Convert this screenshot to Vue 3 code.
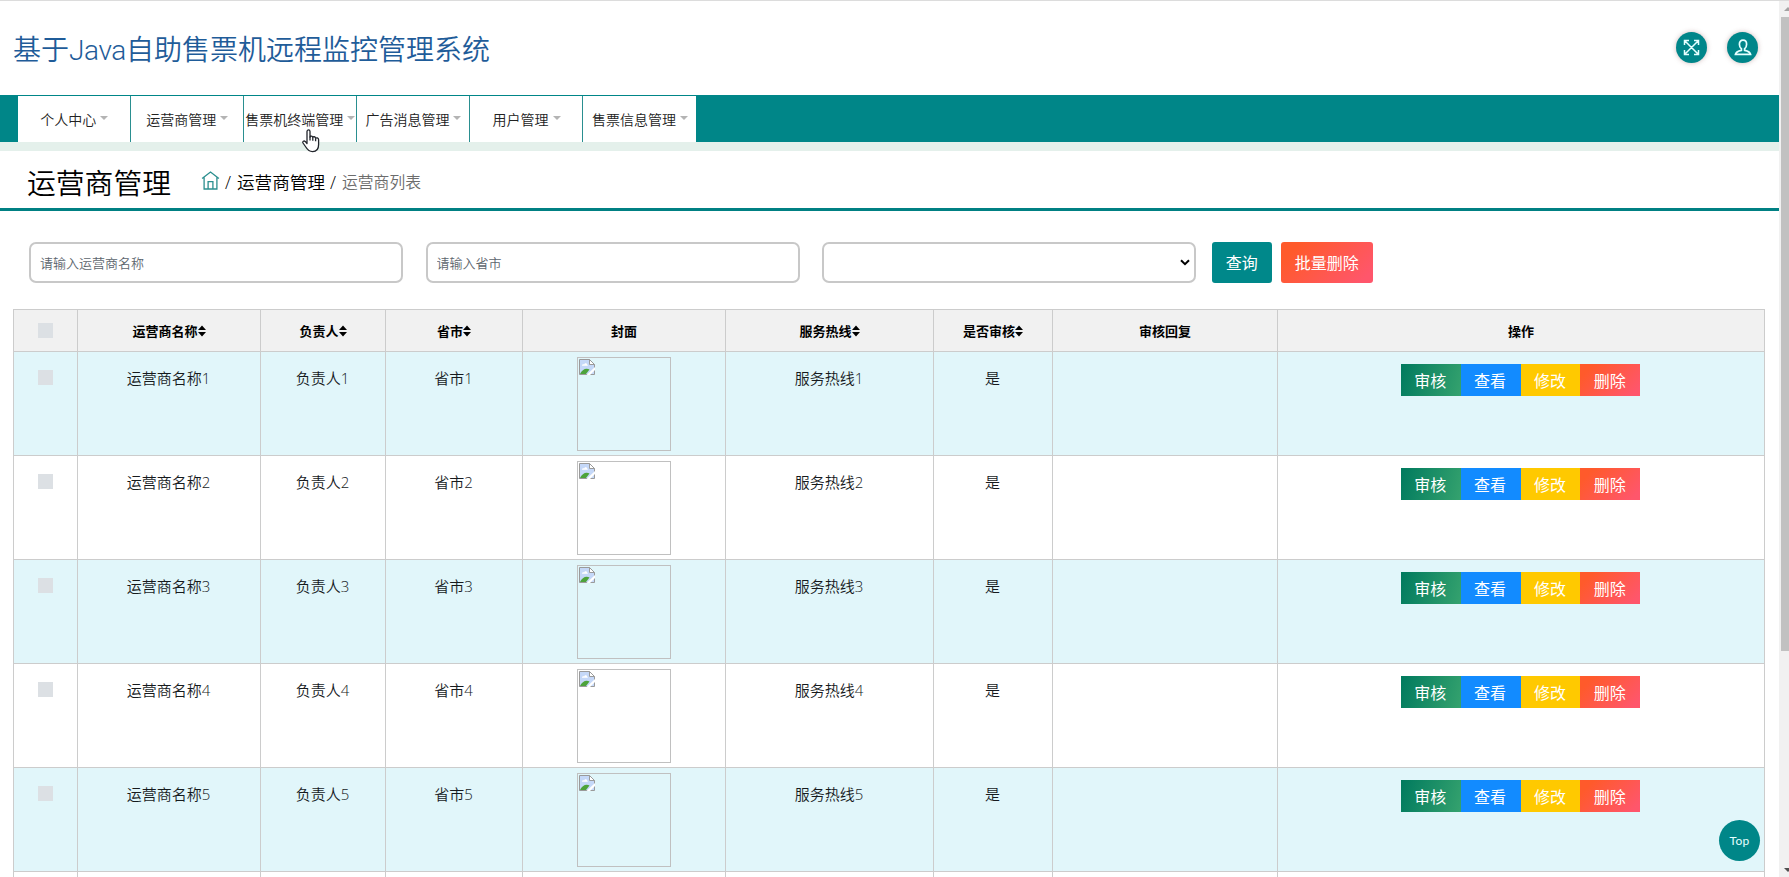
<script setup>
const menus = ['个人中心', '运营商管理', '售票机终端管理', '广告消息管理', '用户管理', '售票信息管理']
const columns = [
  { label: '运营商名称', sort: true },
  { label: '负责人', sort: true },
  { label: '省市', sort: true },
  { label: '封面', sort: false },
  { label: '服务热线', sort: true },
  { label: '是否审核', sort: true },
  { label: '审核回复', sort: false },
  { label: '操作', sort: false },
]
const rows = [1, 2, 3, 4, 5]
</script>

<template>
  <div class="screen">
    <div class="page">
      <header class="header">
        <h1 class="title">基于<span class="latin">Java</span>自助售票机远程监控管理系统</h1>
        <div class="tools">
          <span class="round">
            <svg width="17" height="17" viewBox="0 0 17 17" fill="none" stroke="#e6ffff" stroke-width="1.5">
              <path d="M2 2L15 15M15 2L2 15M1.5 6V1.5H6M11 1.5H15.5V6M15.5 11V15.5H11M6 15.5H1.5V11" />
            </svg>
          </span>
          <span class="round">
            <svg width="18" height="17" viewBox="0 0 18 17" fill="none" stroke="#e6ffff" stroke-width="1.7">
              <path d="M9 1.2C6.6 1.2 5.4 2.9 5.4 5.2C5.4 7.3 6.3 8.9 7.4 9.7V11.3C4.2 12 1.8 13 1.4 15.4H16.6C16.2 13 13.8 12 10.6 11.3V9.7C11.7 8.9 12.6 7.3 12.6 5.2C12.6 2.9 11.4 1.2 9 1.2Z" />
            </svg>
          </span>
        </div>
      </header>

      <nav class="nav">
        <a v-for="m in menus" :key="m" class="tab">{{ m }}<i class="caret"></i></a>
      </nav>

      <section class="crumbs">
        <h2 class="heading">运营商管理</h2>
        <svg class="home" width="19" height="19" viewBox="0 0 18 19" fill="none" stroke="#2b8f8f" stroke-width="1.3">
          <path d="M0.6 7.6L9 1L17.4 7.6M2.6 6.4V18H15.4V6.4M6.6 18V10.6H11.4V18" />
        </svg>
        <span class="crumb slash">/</span>
        <span class="crumb">运营商管理</span>
        <span class="crumb slash2">/</span>
        <span class="crumb current">运营商列表</span>
      </section>

      <section class="filters">
        <input class="field" placeholder="请输入运营商名称" />
        <input class="field" placeholder="请输入省市" />
        <div class="field select">
          <svg width="10" height="7" viewBox="0 0 10 7" fill="none" stroke="#000" stroke-width="2"><path d="M1 1.2L5 5.2L9 1.2" /></svg>
        </div>
        <button class="btn query">查询</button>
        <button class="btn batch">批量删除</button>
      </section>

      <table class="grid">
        <colgroup>
          <col class="c0" /><col class="c1" /><col class="c2" /><col class="c3" /><col class="c4" />
          <col class="c5" /><col class="c6" /><col class="c7" /><col class="c8" />
        </colgroup>
        <thead>
          <tr>
            <th><i class="box"></i></th>
            <th v-for="c in columns" :key="c.label">
              <span class="th">{{ c.label }}<svg v-if="c.sort" width="8" height="12" viewBox="0 0 8 12"><path d="M0 5L4 0.5L8 5ZM0 7L4 11.5L8 7Z" /></svg></span>
            </th>
          </tr>
        </thead>
        <tbody>
          <tr v-for="n in rows" :key="n">
            <td><i class="box"></i></td>
            <td>运营商名称{{ n }}</td>
            <td>负责人{{ n }}</td>
            <td>省市{{ n }}</td>
            <td class="cover">
              <div class="broken">
                <svg width="16" height="16" viewBox="0 0 16 16">
                  <path d="M0.5 0.5H10.5L15.5 5.5V15.5H0.5Z" fill="#c5d8f8" stroke="#9a9a9a" />
                  <path d="M3 6.5C3 5 5 5 5.2 5.5C5.5 3.8 8 4 8 5.5C9 5.5 9 6.5 8.5 6.8H3Z" fill="#fff" />
                  <path d="M1 15C3 10.5 7 8.5 10.5 10.5L7 15Z" fill="#4da33b" />
                  <path d="M10.5 0.5V5.5H15.5Z" fill="#fff" stroke="#9a9a9a" />
                  <path d="M7.5 16L16 8V11L11 16Z" fill="#fff" />
                </svg>
              </div>
            </td>
            <td>服务热线{{ n }}</td>
            <td>是</td>
            <td></td>
            <td class="ops">
              <div class="group">
                <button class="op audit">审核</button>
                <button class="op view">查看</button>
                <button class="op edit">修改</button>
                <button class="op del">删除</button>
              </div>
            </td>
          </tr>
          <tr class="next">
            <td v-for="k in 9" :key="k"></td>
          </tr>
        </tbody>
      </table>
    </div>

    <div class="scrollbar">
      <i class="arrow up"></i>
      <i class="thumb"></i>
      <i class="arrow down"></i>
    </div>

    <div class="top">Top</div>

    <svg class="pointer" width="18" height="24" viewBox="0 0 18 24" fill="#fff" stroke="#22252c" stroke-width="1.3" stroke-linejoin="round">
      <path d="M5 14.5V2.6C5 0.4 8 0.4 8 2.6V8C8.3 6.6 10.6 6.8 10.8 8.4C11.4 7.2 13.4 7.6 13.6 9.2C14.4 8.4 16.6 8.8 16.6 10.8V15.5C16.6 19.5 14.6 22.6 10.6 22.6C6.6 22.6 5.2 20.4 3.8 18L1 14C0.2 12.4 2 11.4 3.2 12.4Z" />
      <path d="M8 7.5V11.5M10.8 8.4V11.8M13.6 9.2V12.2" fill="none" />
    </svg>
  </div>
</template>

<style>
body {
  margin: 0;
  overflow: hidden;
}
</style>

<style scoped>
.screen {
  position: relative;
  display: flex;
  width: 1789px;
  height: 877px;
  overflow: hidden;
  background: #fff;
  font-family: "Open Sans", "Noto Sans CJK SC", sans-serif;
  font-weight: 350;
  box-sizing: border-box;
  border-top: 1px solid #dcdcdc;
}
.page {
  width: 1779px;
  height: 876px;
  overflow: hidden;
}
.header {
  display: flex;
  justify-content: space-between;
  height: 94px;
  padding: 0 21px 0 13px;
}
.title {
  margin: 0;
  font-size: 28px;
  line-height: 97px;
  font-weight: 350;
  color: #1f5c99;
  white-space: nowrap;
}
.latin {
  font-family: Roboto, sans-serif;
  font-weight: 350;
  letter-spacing: -0.4px;
}
.tools {
  display: flex;
  gap: 20px;
  padding-top: 30.5px;
}
.round {
  display: flex;
  align-items: center;
  justify-content: center;
  width: 31px;
  height: 31px;
  border-radius: 50%;
  background: #00868a;
  box-shadow: 0 0 5px rgba(120, 60, 60, 0.35);
}
.nav {
  display: flex;
  height: 47px;
  padding-left: 17.6px;
  background: #008688;
  border-bottom: 9px solid #e4f0eb;
}
.tab {
  display: flex;
  align-items: center;
  justify-content: center;
  width: 113.1px;
  height: 46px;
  margin-top: 1px;
  padding: 0 0 1px 1px;
  box-sizing: border-box;
  border-right: 1px solid #2a8f90;
  background: #fff;
  font-size: 14px;
  color: #222;
  white-space: nowrap;
}
.tab:last-child {
  border-right: 0;
}
.caret {
  width: 0;
  height: 0;
  margin: -2px 0 0 4px;
  border: 4px solid transparent;
  border-top-color: #b4b4b4;
  border-bottom: 0;
}
.crumbs {
  display: flex;
  align-items: center;
  height: 57px;
  padding-left: 27px;
  border-bottom: 3px solid #008083;
}
.heading {
  margin: 7px 30px 0 0;
  font-size: 28.8px;
  line-height: 40px;
  font-weight: 350;
  color: #000;
}
.home {
  margin-top: 2px;
}
.crumb {
  margin-top: 4px;
  font-size: 17.6px;
  line-height: 24px;
  color: #000;
}
.slash {
  margin-left: 5px;
  width: 12px;
}
.slash2 {
  margin-left: 5px;
  width: 12px;
}
.current {
  font-size: 15.8px;
  color: #6c6c6c;
}
.filters {
  display: flex;
  height: 41px;
  padding: 31px 0 0 29px;
}
.field {
  width: 374px;
  height: 41px;
  margin-right: 22.6px;
  padding: 0 9px;
  box-sizing: border-box;
  border: 2px solid #c8c8c8;
  border-radius: 7px;
  background: #fff;
  font-family: inherit;
  font-weight: 350;
  font-size: 13px;
  outline: 0;
}
.field::placeholder {
  color: #5c656d;
  opacity: 1;
}
.select {
  display: flex;
  align-items: center;
  justify-content: flex-end;
  padding-right: 4px;
  margin-right: 16px;
}
.btn {
  height: 41px;
  padding: 0 1px 1px 0;
  border: 0;
  border-radius: 3px;
  font-family: inherit;
  font-size: 16px;
  color: #fff;
}
.query {
  width: 60px;
  margin-right: 9px;
  background: #00888a;
}
.batch {
  width: 92px;
  background: linear-gradient(135deg, #ff5a2b 15%, #ff566b 90%);
}
.grid {
  width: 1752px;
  margin: 26px 0 0 13px;
  table-layout: fixed;
  border-collapse: collapse;
  text-align: center;
}
.c0 { width: 64px; }
.c1 { width: 183px; }
.c2 { width: 125px; }
.c3 { width: 137px; }
.c4 { width: 203px; }
.c5 { width: 208px; }
.c6 { width: 119px; }
.c7 { width: 225px; }
.c8 { width: 487px; }
th,
td {
  padding: 0;
  border: 1px solid #ccc;
}
th {
  height: 41px;
  background: #f1f1f1;
  font-size: 13px;
  font-weight: 700;
  color: #000;
}
.th {
  display: inline-flex;
  align-items: center;
}
td {
  height: 88px;
  padding: 15px 1px 0 0;
  vertical-align: top;
  font-size: 15px;
  line-height: 22px;
  color: #161a1d;
}
tbody tr:nth-child(odd) {
  background: #e1f6fa;
}
.box {
  display: block;
  width: 15px;
  height: 15px;
  margin: 0 auto;
  background: #dce0e4;
}
td .box {
  margin-top: 3px;
}
td.cover {
  height: 98px;
  padding-top: 5px;
}
.broken {
  width: 94px;
  height: 94px;
  margin: 0 auto;
  box-sizing: border-box;
  border: 1px solid #c0c0c0;
}
.broken svg {
  display: block;
  margin: 1px;
}
td.ops {
  height: 91px;
  padding-top: 12px;
}
.group {
  display: flex;
  justify-content: center;
}
.op {
  width: 59.9px;
  height: 32px;
  padding: 0 1px 1px 0;
  border: 0;
  font-family: inherit;
  font-size: 16px;
  color: #fff;
}
.audit { background: linear-gradient(105deg, #007a5e, #35a26e); }
.view { background: #128bff; }
.edit { background: #ffc900; }
.del { background: linear-gradient(135deg, #ff5a2b 15%, #ff566b 90%); }
.scrollbar {
  display: flex;
  flex-direction: column;
  align-items: flex-start;
  width: 10px;
  height: 876px;
  overflow: hidden;
  background: #f1f1f1;
}
.thumb {
  flex: none;
  width: 8px;
  height: 634px;
  margin: 6px 0 0 2px;
  background: #c1c1c1;
}
.arrow {
  flex: none;
  width: 0;
  height: 0;
  margin-left: 5px;
  border: 4px solid transparent;
}
.up {
  margin-top: 6px;
  border-top: 0;
  border-bottom-color: #a3a3a3;
}
.down {
  margin-top: auto;
  margin-bottom: 5px;
  border-bottom: 0;
  border-top-color: #505050;
}
.top {
  position: absolute;
  right: 29px;
  bottom: 16px;
  width: 41px;
  height: 41px;
  border-radius: 50%;
  background: #008688;
  color: #e6ffff;
  font: 400 12px/42px Lato, sans-serif;
  letter-spacing: 0.3px;
  text-align: center;
}
.pointer {
  position: absolute;
  left: 302px;
  top: 128px;
}
</style>
